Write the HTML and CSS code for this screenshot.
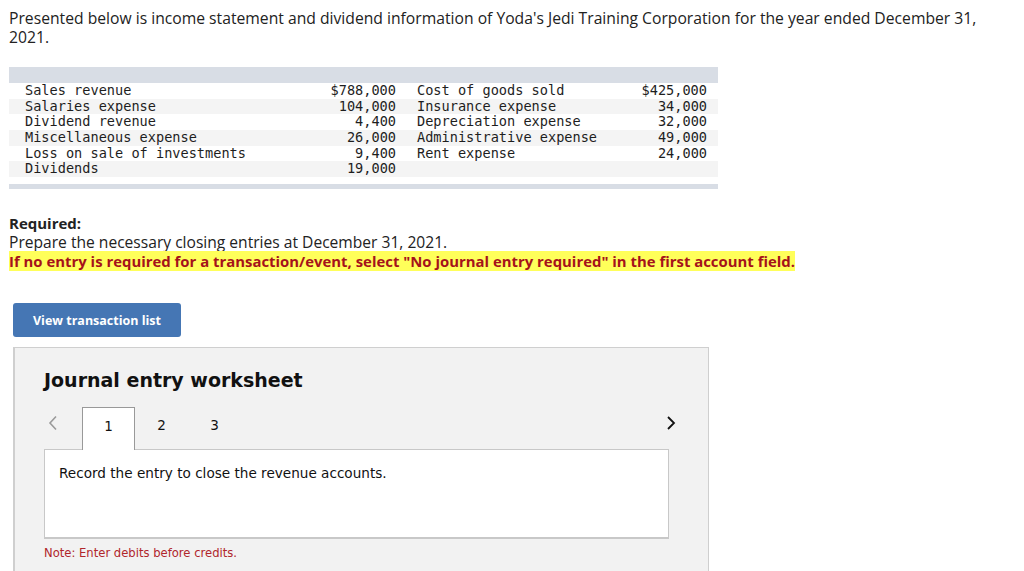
FILE: index.html
```html
<!DOCTYPE html>
<html>
<head>
<meta charset="utf-8">
<link rel="stylesheet" href="styles.css">
</head>
<body>
<p class="intro">Presented below is income statement and dividend information of Yoda's Jedi Training Corporation for the year ended December 31, 2021.</p>

<div class="data">
  <div class="band-top"></div>
  <div class="row"><span class="lab">Sales revenue</span><span class="amt">$788,000</span><span class="lab2">Cost of goods sold</span><span class="amt2">$425,000</span></div>
  <div class="row alt"><span class="lab">Salaries expense</span><span class="amt">104,000</span><span class="lab2">Insurance expense</span><span class="amt2">34,000</span></div>
  <div class="row"><span class="lab">Dividend revenue</span><span class="amt">4,400</span><span class="lab2">Depreciation expense</span><span class="amt2">32,000</span></div>
  <div class="row alt"><span class="lab">Miscellaneous expense</span><span class="amt">26,000</span><span class="lab2">Administrative expense</span><span class="amt2">49,000</span></div>
  <div class="row"><span class="lab">Loss on sale of investments</span><span class="amt">9,400</span><span class="lab2">Rent expense</span><span class="amt2">24,000</span></div>
  <div class="row alt"><span class="lab">Dividends</span><span class="amt">19,000</span><span class="lab2"></span><span class="amt2"></span></div>
  <div class="band-bottom"></div>
</div>

<div class="required">
  <div class="req-title">Required:</div>
  <div>Prepare the necessary closing entries at December 31, 2021.</div>
  <div class="warn"><span class="hl">If no entry is required for a transaction/event, select "No journal entry required" in the first account field.</span></div>
</div>

<button class="btn">View transaction list</button>

<div class="panel">
  <h2 class="ws-title">Journal entry worksheet</h2>
  <div class="tabs">
    <span class="nav prev"><svg width="10" height="16" viewBox="0 0 10 16"><path d="M8 1.5 L2 8 L8 14.5" fill="none" stroke="#9a9a9a" stroke-width="1.6"/></svg></span>
    <span class="tab active">1</span>
    <span class="tab">2</span>
    <span class="tab">3</span>
    <span class="spacer"></span>
    <span class="nav next"><svg width="10" height="16" viewBox="0 0 10 16"><path d="M2 2 L8 8 L2 14" fill="none" stroke="#111" stroke-width="1.8"/></svg></span>
  </div>
  <div class="entry">Record the entry to close the revenue accounts.</div>
  <div class="note">Note: Enter debits before credits.</div>
</div>
</body>
</html>
```
FILE: styles.css
```css
html, body {
  margin: 0;
  padding: 0;
  background: #fff;
}
body {
  padding: 9px 0 0 9px;
  font-family: "Open Sans", Lato, sans-serif;
  color: #222;
  overflow: hidden;
  height: 562px;
}
.intro {
  margin: 0;
  width: 990px;
  font-size: 15.7px;
  line-height: 19px;
}
.data {
  margin-top: 20px;
  width: 709px;
  font-family: "DejaVu Sans Mono", monospace;
  font-size: 13.6px;
  color: #1e1e1e;
}
.band-top {
  height: 16px;
  background: #d8dde5;
}
.band-bottom {
  margin-top: 7px;
  height: 5px;
  background: #d8dde5;
}
.row {
  display: grid;
  grid-template-columns: 16px 257px 114px 21px 200px 90px;
  height: 15.7px;
  line-height: 15.7px;
  white-space: pre;
}
.row.alt { background: #f4f4f4; }
.row .lab { grid-column: 2; }
.row .amt { grid-column: 3; text-align: right; }
.row .lab2 { grid-column: 5; }
.row .amt2 { grid-column: 6; text-align: right; }
.required {
  margin-top: 25px;
  font-size: 15.6px;
  line-height: 19px;
}
.req-title { font-weight: 700; font-size: 15px; }
.warn { font-weight: 700; color: #a5121a; font-size: 14.9px; }
.hl { background: #ffff5a; }
.btn {
  display: block;
  margin: 32px 0 0 4px;
  width: 168px;
  height: 34px;
  border: none;
  border-radius: 3px;
  background: #4576b4;
  color: #fff;
  font-family: "Open Sans", Lato, sans-serif;
  font-weight: 700;
  font-size: 12.5px;
  padding: 0;
}
.panel {
  margin: 10px 0 0 4px;
  width: 664px;
  height: 240px;
  padding: 0 0 0 29px;
  background: #f2f2f2;
  border: 1px solid #cfcfcf;
  border-left-width: 2px;
  font-family: "DejaVu Sans", Verdana, sans-serif;
}
.ws-title {
  margin: 21px 0 0 0;
  font-size: 19px;
  line-height: 22px;
  font-weight: 700;
  color: #111;
}
.tabs {
  display: flex;
  align-items: flex-end;
  margin-top: 16px;
  height: 42px;
  width: 638px;
}
.nav {
  height: 42px;
  display: flex;
  align-items: flex-start;
  padding-top: 8px;
  box-sizing: border-box;
}
.prev { width: 38px; padding-left: 4px; }
.tab {
  width: 53px;
  height: 42px;
  box-sizing: border-box;
  display: flex;
  justify-content: center;
  align-items: flex-start;
  padding-top: 10px;
  font-size: 13.5px;
  color: #111;
}
.tab.active {
  background: #fff;
  border: 1px solid #999;
  border-bottom: none;
  height: 43px;
  margin-bottom: -1px;
  position: relative;
  z-index: 1;
}
.spacer { flex: 1; }
.next { width: 16px; }
.entry {
  width: 625px;
  height: 90px;
  box-sizing: border-box;
  background: #fff;
  border: 1px solid #c8c8c8;
  border-bottom-width: 2px;
  padding: 15px 0 0 14px;
  font-size: 13.6px;
  color: #111;
}
.note {
  margin-top: 7px;
  font-size: 11.6px;
  color: #b0262c;
}
```
